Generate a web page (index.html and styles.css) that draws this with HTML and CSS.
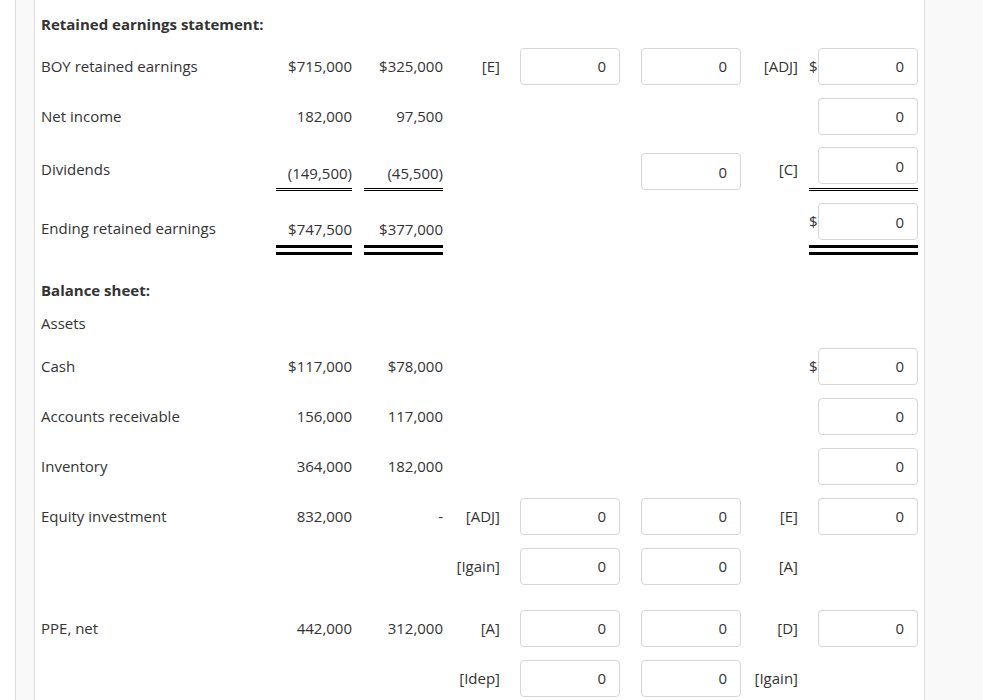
FILE: index.html
```html
<!DOCTYPE html>
<html>
<head>
<meta charset="utf-8">
<link rel="stylesheet" href="styles.css">
</head>
<body>
<div class="frame">
  <div class="panel">
    <div class="row title-row"><div class="title">Retained earnings statement:</div></div>

    <div class="row std">
      <div class="lab">BOY retained earnings</div>
      <div class="num">$715,000</div>
      <div class="num c2">$325,000</div>
      <div class="tag l3">[E]</div>
      <input class="inp i1" type="text" value="0">
      <input class="inp i2" type="text" value="0">
      <div class="tag l4">[ADJ]</div>
      <div class="dol">$</div>
      <input class="inp i3" type="text" value="0">
    </div>

    <div class="row std">
      <div class="lab">Net income</div>
      <div class="num">182,000</div>
      <div class="num c2">97,500</div>
      <input class="inp i3" type="text" value="0">
    </div>

    <div class="row div-row">
      <div class="lab dv-lab">Dividends</div>
      <div class="num u1 dv-num">(149,500)</div>
      <div class="num c2 u1 dv-num">(45,500)</div>
      <input class="inp i2 dv-i2" type="text" value="0">
      <div class="tag l4 dv-lab">[C]</div>
      <div class="tot u1 dv-tot"><input class="inp" type="text" value="0"></div>
    </div>

    <div class="row end-row">
      <div class="lab en-lab">Ending retained earnings</div>
      <div class="num u2 en-num">$747,500</div>
      <div class="num c2 u2 en-num">$377,000</div>
      <div class="tot u2 en-tot"><span class="dol-in">$</span><input class="inp" type="text" value="0"></div>
    </div>

    <div class="row bs-row"><div class="title">Balance sheet:</div></div>
    <div class="row assets-row"><div class="lab">Assets</div></div>

    <div class="row std">
      <div class="lab">Cash</div>
      <div class="num">$117,000</div>
      <div class="num c2">$78,000</div>
      <div class="dol">$</div>
      <input class="inp i3" type="text" value="0">
    </div>

    <div class="row std">
      <div class="lab">Accounts receivable</div>
      <div class="num">156,000</div>
      <div class="num c2">117,000</div>
      <input class="inp i3" type="text" value="0">
    </div>

    <div class="row std">
      <div class="lab">Inventory</div>
      <div class="num">364,000</div>
      <div class="num c2">182,000</div>
      <input class="inp i3" type="text" value="0">
    </div>

    <div class="row std">
      <div class="lab">Equity investment</div>
      <div class="num">832,000</div>
      <div class="num c2">-</div>
      <div class="tag l3">[ADJ]</div>
      <input class="inp i1" type="text" value="0">
      <input class="inp i2" type="text" value="0">
      <div class="tag l4">[E]</div>
      <input class="inp i3" type="text" value="0">
    </div>

    <div class="row std">
      <div class="tag l3">[Igain]</div>
      <input class="inp i1" type="text" value="0">
      <input class="inp i2" type="text" value="0">
      <div class="tag l4">[A]</div>
    </div>

    <div class="spacer"></div>

    <div class="row std">
      <div class="lab">PPE, net</div>
      <div class="num">442,000</div>
      <div class="num c2">312,000</div>
      <div class="tag l3">[A]</div>
      <input class="inp i1" type="text" value="0">
      <input class="inp i2" type="text" value="0">
      <div class="tag l4">[D]</div>
      <input class="inp i3" type="text" value="0">
    </div>

    <div class="row std">
      <div class="tag l3">[Idep]</div>
      <input class="inp i1" type="text" value="0">
      <input class="inp i2" type="text" value="0">
      <div class="tag l4">[Igain]</div>
    </div>
  </div>
</div>
</body>
</html>
```

FILE: styles.css
```css
html, body {
  margin: 0;
  padding: 0;
  background: #ffffff;
}

body {
  font-family: "Open Sans", "Liberation Sans", sans-serif;
  font-size: 15px;
  line-height: 20px;
  color: #333333;
  overflow: hidden;
}

.frame {
  margin-left: 15px;
  border-left: 1px solid #dddddd;
  background: #f9f9f9;
  padding-left: 18px;
  min-height: 700px;
}

.panel {
  width: 883px;
  min-height: 700px;
  background: #ffffff;
  border-left: 1px solid #dddddd;
  border-right: 1px solid #dddddd;
  padding-left: 6px;
  box-sizing: content-box;
}

.row {
  display: grid;
  grid-template-columns: 235px 76px 91px 77px 100px 121px 68px 9px 100px;
  align-items: center;
}

.std {
  height: 50px;
}

.title-row {
  height: 41px;
  align-items: start;
  padding-top: 14px;
  box-sizing: border-box;
}

.title {
  grid-column: 1 / 4;
  font-weight: 700;
}

.lab {
  grid-column: 1;
}

.num {
  text-align: right;
  white-space: nowrap;
}

.row > .num:not(.c2) {
  grid-column: 2;
}

.c2 {
  grid-column: 3;
  margin-left: 12px;
}

.tag {
  text-align: right;
  white-space: nowrap;
}

.l3 {
  grid-column: 4;
  padding-right: 20px;
}

.l4 {
  grid-column: 7;
  padding-right: 11px;
}

.dol {
  grid-column: 8;
  text-align: left;
}

.inp {
  display: block;
  box-sizing: border-box;
  width: 100px;
  height: 37px;
  margin: 0;
  border: 1px solid #d6d6d6;
  border-radius: 4px;
  background: #ffffff;
  padding: 0 13px 0 4px;
  text-align: right;
  font-family: "Open Sans", "Liberation Sans", sans-serif;
  font-size: 15px;
  color: #333333;
  outline: none;
}

.i1 {
  grid-column: 5;
}

.i2 {
  grid-column: 6;
  margin-left: 21px;
}

.i3 {
  grid-column: 9;
}

.u1 {
  border-bottom: 3px double #000000;
}

.u2 {
  border-bottom: 10px double #000000;
}

/* dividends row */
.div-row {
  height: 58px;
  align-items: start;
}

.dv-lab {
  margin-top: 18px;
}

.dv-num {
  margin-top: 22px;
  padding-bottom: 5px;
}

.dv-i2 {
  margin-top: 12px;
}

.tot {
  grid-column: 8 / 10;
  display: flex;
  justify-content: flex-end;
  align-items: center;
}

.dv-tot {
  margin-top: 6px;
  padding-bottom: 4px;
}

/* ending row */
.end-row {
  height: 56px;
  align-items: start;
}

.en-lab {
  margin-top: 19px;
}

.en-num {
  margin-top: 20px;
  padding-bottom: 6px;
}

.en-tot {
  margin-top: 4px;
  padding-bottom: 5px;
  justify-content: space-between;
}

.dol-in {
  margin-top: -2px;
}

.bs-row {
  height: 45px;
  align-items: start;
  padding-top: 25px;
  box-sizing: border-box;
}

.assets-row {
  height: 41px;
  align-items: start;
  padding-top: 13px;
  box-sizing: border-box;
}

.spacer {
  height: 12px;
}
```
